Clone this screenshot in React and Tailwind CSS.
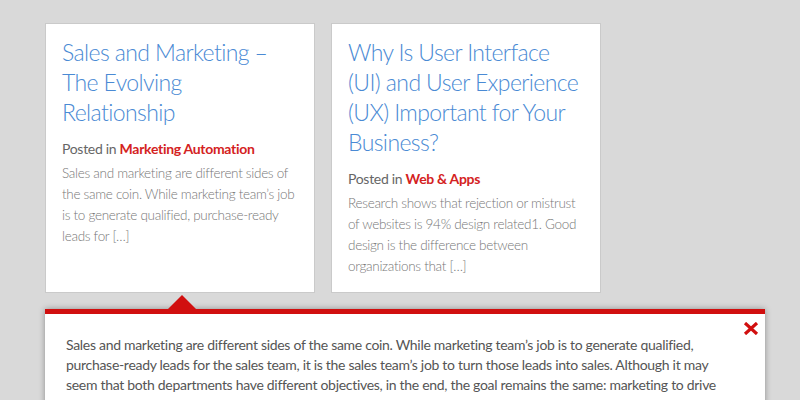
import React from "react";

const posts = [
	{
		title: "Sales and Marketing – The Evolving Relationship",
		category: "Marketing Automation",
		excerpt:
			"Sales and marketing are different sides of the same coin. While marketing team’s job is to generate qualified, purchase-ready leads for […]",
	},
	{
		title: "Why Is User Interface (UI) and User Experience (UX) Important for Your Business?",
		category: "Web & Apps",
		excerpt:
			"Research shows that rejection or mistrust of websites is 94% design related1. Good design is the difference between organizations that […]",
	},
];

function PostCard({ post }) {
	return (
		<div className="w-[270px] bg-white border border-[#cacaca] px-4 pt-[13px] pb-[15px]">
			<h2 className="text-[23px] leading-[30px] font-light tracking-[-0.6px] text-[#4a8ad4]">
				{post.title}
			</h2>
			<p className="mt-[12px] text-[14px] leading-5 tracking-[-0.3px] text-[#666]">
				Posted in{" "}
				<a href="#" className="font-bold text-[#d42222]">
					{post.category}
				</a>
			</p>
			<p className="mt-[4px] text-[13.5px] leading-[21px] font-light tracking-[-0.3px] text-[#777]">
				{post.excerpt}
			</p>
		</div>
	);
}

export default function App() {
	return (
		<div className="h-[400px] overflow-hidden bg-[#d9d9d9] pt-[23px] pl-[45px] font-['Lato','Open_Sans',sans-serif]">
			<div className="flex gap-4">
				{posts.map((post, index) => (
					<PostCard key={index} post={post} />
				))}
			</div>

			{/* expanded excerpt */}
			<div className="relative mt-4 w-[720px] bg-white border-t-[5px] border-[#d10f0f] shadow-[0_0_6px_rgba(0,0,0,0.35)] pl-[21px] pr-[40px] pt-[21px] pb-6">
				<span className="absolute -top-[19px] left-[123px] w-0 h-0 border-l-[14px] border-r-[14px] border-b-[14px] border-l-transparent border-r-transparent border-b-[#d10f0f]" />
				<button className="absolute right-[6px] top-[8px] text-[#d10f0f]">
					<svg width="16" height="13" viewBox="0 0 16 13" className="block">
						<path
							d="M2 1L14 12M14 1L2 12"
							stroke="currentColor"
							strokeWidth="3.2"
						/>
					</svg>
				</button>
				<p className="text-[14px] leading-5 tracking-[-0.3px] text-[#555]">
					Sales and marketing are different sides of the same coin. While marketing team’s job is to generate qualified,
					purchase-ready leads for the sales team, it is the sales team’s job to turn those leads into sales. Although it may
					seem that both departments have different objectives, in the end, the goal remains the same: marketing to drive
					sales and revenue.
				</p>
			</div>
		</div>
	);
}
